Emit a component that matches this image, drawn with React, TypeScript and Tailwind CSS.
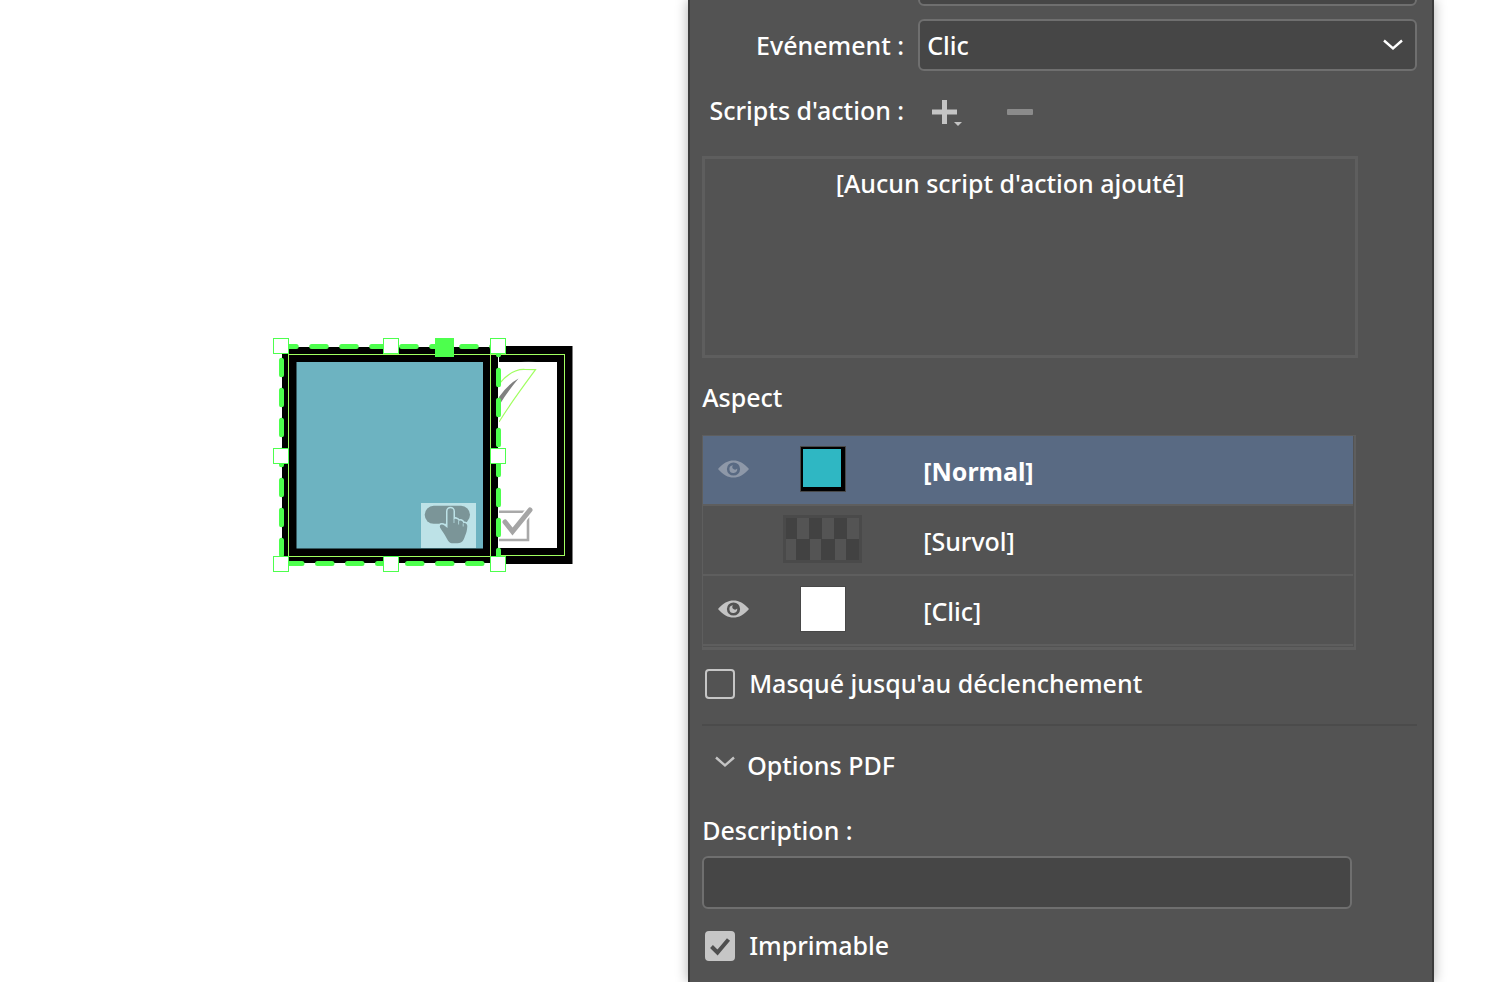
import { useState } from 'react';

type StateRow = {
    id: string;
    label: string;
    visible: boolean | null;
};

const rows: StateRow[] = [
    { id: 'normal', label: '[Normal]', visible: true },
    { id: 'rollover', label: '[Survol]', visible: null },
    { id: 'click', label: '[Clic]', visible: true },
];

const handles = [
    [273, 338], [383, 338], [490, 338],
    [273, 448], [490, 448],
    [273, 556], [383, 556], [490, 556],
];

function EyeIcon({ dimmed }: { dimmed: boolean }) {
    return (
        <svg width="31" height="18" viewBox="0 0 31 18" className={dimmed ? 'text-[#8e98a8]' : 'text-[#c3c3c3]'}>
            <path
                fill="currentColor"
                fillRule="evenodd"
                d="M0 9 C5 3 10 0.4 15.5 0.4 S26 3 31 9 C26 15 21 17.6 15.5 17.6 S5 15 0 9Z M15.5 2.4 a6.6 6.6 0 1 0 0 13.2 a6.6 6.6 0 1 0 0 -13.2Z"
            />
            <path fill="currentColor" d="M15 5.2 A2.6 2.6 0 0 0 19.2 8.6 A3.9 3.9 0 1 1 15 5.2Z" />
        </svg>
    );
}

function EmptyThumb() {
    return (
        <svg width="79" height="48" viewBox="0 0 79 48">
            <rect width="79" height="48" fill="#4a4a4a" />
            <rect x="3" y="3" width="73" height="42" fill="#545454" />
            <path fill="#424242" d="M3 3h11v21H3z M26 3h13v21H26z M51 3h13v21H51z M13 24h14v21H13z M38 24h14v21H38z M63 24h13v21H63z" />
        </svg>
    );
}

function Thumb({ id }: { id: string }) {
    if (id === 'rollover') return <EmptyThumb />;
    if (id === 'click') return <span className="block size-[46px] border border-[#484848] bg-white" />;
    return (
        <span className="block size-[46px] border border-[#484848] bg-black pt-0.5 pl-0.5">
            <span className="block size-[38px] bg-[#2fb7c3]" />
        </span>
    );
}

// Button object with its selection frame, lying over the check box object
function Artwork() {
    return (
        <svg
            className="absolute top-[338px] left-[273px]"
            width="300"
            height="234"
            viewBox="273 338 300 234"
            role="img"
            aria-label="Bouton sélectionné"
        >
            <rect x="400" y="346" width="172.5" height="218" fill="#000" />
            <rect x="498" y="362" width="59" height="186" fill="#fff" />
            <path d="M521 362 Q528 360.4 536 362Z" fill="#333" />
            <path d="M499 397 Q508 384 518.5 378.5 Q508 391 500 404Z" fill="#808080" />
            <path d="M499 384 C508 373 516 369 525 369.5 L535.5 369.7 C525 384 510 404 499 422" fill="none" stroke="#a0ff60" strokeWidth="1.2" />

            <path d="M499 511.8 H528 V540 H499" fill="none" stroke="#a9a9a9" strokeWidth="2.6" />
            <path d="M505 522 L512.5 531.5 L530 510" fill="none" stroke="#fff" strokeWidth="8" strokeLinecap="square" />
            <path d="M505 522 L512.5 531.5 L530 510" fill="none" stroke="#a5a5a5" strokeWidth="5" strokeLinecap="round" />

            {/* back to black above the frame, then the selected button itself */}
            <rect x="400" y="347" width="98" height="216" fill="#000" />
            <rect x="282" y="347" width="216" height="216" fill="#000" />
            <path d="M282 346 H498 V347 H282Z M282 563 H498 V565 H282Z" fill="#fff" />
            <rect x="498" y="354" width="1" height="194" fill="#fff" />
            <rect x="296.5" y="362" width="186.5" height="186.5" fill="#6db3c1" />

            <rect x="421" y="503" width="55" height="45" fill="#bde2e7" />
            <rect x="424.7" y="505.8" width="45.3" height="18" rx="9" fill="#7b9598" />
            <path
                d="M447.5 528 V511.3 a3 3 0 0 1 6 0 V519.5 C454.5 518 458 518.5 458.6 521 C460 519.8 463 520.6 463.3 523.3 C465 522.4 467.6 523.6 467.3 526.4 C467 531 466.2 533 465 536 C464 539 463 543 457.5 543.3 H453 C449.5 543.3 448 541 446.5 538 C444.5 534 441.5 530 440 527.5 C439 524.5 442 523.6 444 525.3Z"
                fill="#7b9598"
                stroke="#bde2e7"
                strokeWidth="3"
                strokeLinejoin="round"
                paintOrder="stroke"
            />
            <path d="M454 519 V523 M458.6 521 V524.5 M463.2 523.5 V526.5" stroke="#bde2e7" strokeWidth="0.8" />

            <g stroke="#a0ff60" fill="none" shapeRendering="crispEdges">
                <path d="M288 354.5 H565 M288 556.5 H498 M498 555.5 H565" />
                <path d="M288.5 354 V557 M490.5 354 V557 M564.5 354 V556" />
            </g>

            <g stroke="#4dff4d" strokeWidth="5" strokeLinecap="round" strokeDasharray="14.5 15.5" fill="none">
                <path d="M281.7 346.5 H498" />
                <path d="M287.5 563.5 H498" />
                <path d="M281.5 360.2 V563" />
                <path d="M498.5 340.2 V563" />
            </g>

            {handles.map(([x, y]) => (
                <rect key={`${x}-${y}`} x={x + 0.5} y={y + 0.5} width="15" height="15" fill="#fff" stroke="#4dff4d" />
            ))}
            <rect x="435" y="338" width="19" height="19" fill="#4dff4d" />
        </svg>
    );
}

function Chevron({ className }: { className: string }) {
    return (
        <svg width="20" height="12" viewBox="0 0 20 12" className={className}>
            <path d="M1 1.5 L10 9.5 L19 1.5" fill="none" stroke="currentColor" strokeWidth="2.4" />
        </svg>
    );
}

function CheckBox({ id, label, checked, onChange }: { id: string; label: string; checked: boolean; onChange: (v: boolean) => void }) {
    return (
        <div className="flex h-[30px] items-center gap-3.5 pl-[3px]">
            <span className="relative block size-[30px]">
                <input
                    id={id}
                    type="checkbox"
                    checked={checked}
                    onChange={e => onChange(e.target.checked)}
                    className="block size-[30px] appearance-none rounded border-2 border-[#c6c6c6] checked:bg-[#c6c6c6]"
                />
                {checked && (
                    <svg className="pointer-events-none absolute inset-0" width="30" height="30" viewBox="0 0 30 30">
                        <path d="M6.5 15.5 L12.5 21.5 L23.5 8.5" fill="none" stroke="#4f4f4f" strokeWidth="4" />
                    </svg>
                )}
            </span>
            <label htmlFor={id} className="pb-0.5">{label}</label>
        </div>
    );
}

export default function App() {
    const [selected, setSelected] = useState('normal');
    const [hidden, setHidden] = useState(false);
    const [printable, setPrintable] = useState(true);
    const [description, setDescription] = useState('');

    return (
        <div className="grid h-screen grid-cols-[46%_1fr_62px] overflow-hidden bg-white font-['Noto_Sans',sans-serif] text-[25px] leading-[30px] font-medium text-white">
            <main className="relative">
                <Artwork />
            </main>

            <aside className="overflow-hidden border-x-2 border-[#3b3b3b] bg-[#535353] pr-[15px] pl-3 shadow-[0_0_12px_rgba(0,0,0,0.32)]">
                <div className="-mt-[46px] grid grid-cols-[202px_1fr] items-center gap-x-3.5 gap-y-[13px]">
                    <span />
                    <select aria-label="Type" className="h-[52px] w-full appearance-none rounded-md border-2 border-[#6f6f6f] bg-[#464646] px-2"></select>

                    <label htmlFor="event" className="text-right">Evénement :</label>
                    <div className="relative">
                        <select id="event" className="block h-[52px] w-full appearance-none rounded-md border-2 border-[#6f6f6f] bg-[#464646] px-[7px]">
                            <option>Clic</option>
                        </select>
                        <Chevron className="pointer-events-none absolute top-5 right-3.5" />
                    </div>
                </div>

                <div className="mt-5 grid h-10 grid-cols-[202px_1fr] items-center gap-x-3.5">
                    <span className="pb-0.5 text-right whitespace-nowrap">Scripts d'action :</span>
                    <div className="flex items-center gap-[43px] pl-3.5">
                        <button type="button" aria-label="Ajouter un script">
                            <svg width="32" height="30" viewBox="0 0 32 30" className="block">
                                <path d="M12.5 4 V28 M0 16 H25" stroke="#c4c4c4" strokeWidth="5" />
                                <path d="M22 26 H30 L26 30Z" fill="#c4c4c4" />
                            </svg>
                        </button>
                        <button type="button" aria-label="Supprimer le script">
                            <svg width="26" height="30" viewBox="0 0 26 30" className="block">
                                <rect y="13" width="26" height="6" rx="1" fill="#8b8b8b" />
                            </svg>
                        </button>
                    </div>
                </div>

                <div className="mt-[25px] mr-[59px] h-[202px] border-[3px] border-[#5e5e5e] pt-[9px] pr-10 text-center">
                    [Aucun script d'action ajouté]
                </div>

                <h2 className="mt-6">Aspect</h2>
                <ul className="mt-[23px] mr-[61px] border-t border-r-2 border-b-[3px] border-l border-[#5e5e5e] pr-px pb-px">
                    {rows.map(row => (
                        <li
                            key={row.id}
                            className={`grid h-[70px] grid-cols-[63px_113px_1fr] items-center border-b-2 border-[#5e5e5e] ${selected === row.id ? 'bg-[#596a83]' : ''}`}
                        >
                            <span className="pb-0.5 pl-[15px]">
                                {row.visible !== null && (
                                    <button type="button" aria-label={`Visibilité ${row.label}`} className="block">
                                        <EyeIcon dimmed={selected === row.id} />
                                    </button>
                                )}
                            </span>
                            <span className="flex justify-center pb-0.5">
                                <Thumb id={row.id} />
                            </span>
                            <button
                                type="button"
                                onClick={() => setSelected(row.id)}
                                className={`pt-0.5 pl-11 text-left ${selected === row.id ? 'font-bold' : ''}`}
                            >
                                {row.label}
                            </button>
                        </li>
                    ))}
                </ul>

                <div className="mt-[19px]">
                    <CheckBox id="hidden" label="Masqué jusqu'au déclenchement" checked={hidden} onChange={setHidden} />
                </div>

                <hr className="mt-[25px] border-t-2 border-[#4b4b4b]" />

                <button type="button" className="mt-6 flex h-[30px] items-center gap-3 pl-[13px]">
                    <Chevron className="mb-1.5 text-[#c4c4c4]" />
                    Options PDF
                </button>

                <label htmlFor="description" className="mt-[35px] block">Description :</label>
                <div className="mt-[11px] mr-[65px]">
                    <input
                        id="description"
                        type="text"
                        value={description}
                        onChange={e => setDescription(e.target.value)}
                        className="block h-[53px] w-full rounded-md border-2 border-[#6f6f6f] bg-[#464646] px-2"
                    />
                </div>

                <div className="mt-[22px]">
                    <CheckBox id="printable" label="Imprimable" checked={printable} onChange={setPrintable} />
                </div>
            </aside>
        </div>
    );
}
